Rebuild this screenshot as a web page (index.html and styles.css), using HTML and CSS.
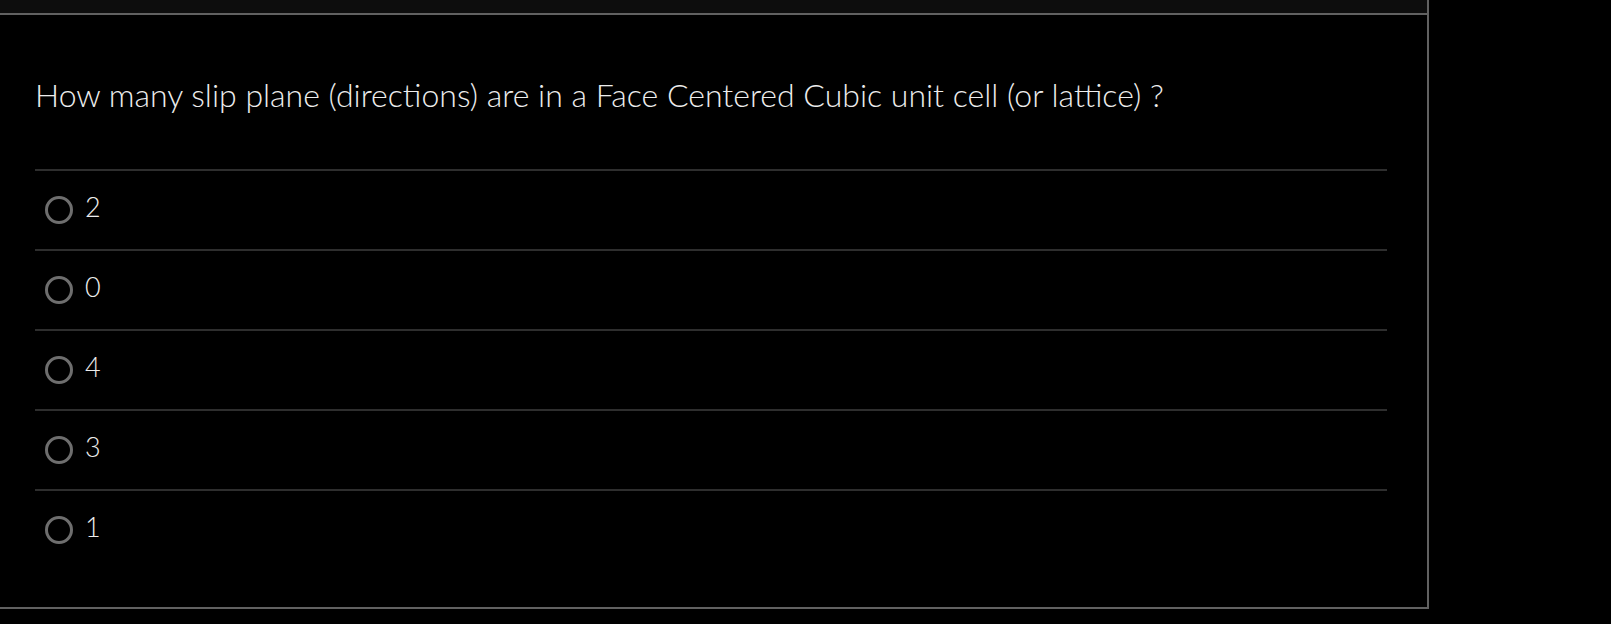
FILE: index.html
```html
<!DOCTYPE html>
<html>

<head>
    <meta charset="UTF-8">
    <title>Quiz question</title>
    <link rel="stylesheet" href="styles.css">
</head>

<body>
    <div class="quiz-frame">
        <div class="topbar"></div>
        <div class="question">
            <div class="question-text">How many slip plane (directions) are in a Face Centered Cubic unit cell (or lattice) ?</div>
            <div class="answers">
                <label class="answer"><span class="radio"></span><span class="answer-label">2</span></label>
                <label class="answer"><span class="radio"></span><span class="answer-label">0</span></label>
                <label class="answer"><span class="radio"></span><span class="answer-label">4</span></label>
                <label class="answer"><span class="radio"></span><span class="answer-label">3</span></label>
                <label class="answer"><span class="radio"></span><span class="answer-label">1</span></label>
            </div>
        </div>
    </div>
</body>

</html>
```

FILE: styles.css
```css
body {
    font-family: 'Lato Light', Lato, 'Open Sans', sans-serif;
    font-weight: 300;
    background: #000;
    color: #ededed;
    margin: 0;
    padding: 0;
}

.quiz-frame {
    width: 1429px;
    box-sizing: border-box;
    border-right: 2px solid #616161;
    border-bottom: 2px solid #616161;
}

.topbar {
    height: 13px;
    background: #0d0d0d;
    border-bottom: 2px solid #616161;
}

.question {
    padding: 0 40px 38px 35px;
}

.question-text {
    font-size: 32px;
    line-height: 38px;
    margin-top: 61px;
    margin-bottom: 55px;
}

.answer {
    display: flex;
    align-items: center;
    height: 78px;
    border-top: 2px solid #2e2e2e;
}

.radio {
    width: 28px;
    height: 28px;
    box-sizing: border-box;
    border: 3px solid #6e6e6e;
    border-radius: 50%;
    margin-left: 10px;
}

.answer-label {
    font-size: 27px;
    margin-left: 12px;
    padding-bottom: 8px;
}
```
